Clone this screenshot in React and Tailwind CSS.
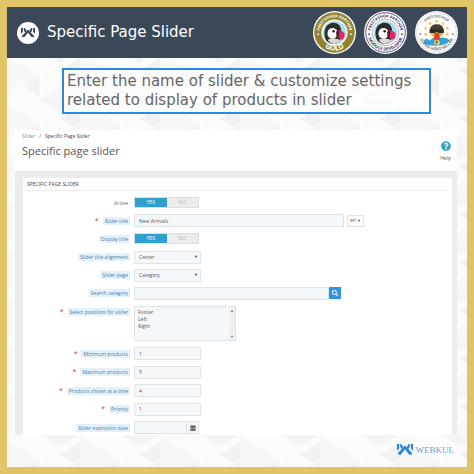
import React, { useState } from 'react';
import { FaSearch, FaQuestionCircle, FaCalendarAlt } from 'react-icons/fa';

const fieldClass = 'h-[13px] border border-[#dde3e6] bg-[#f4f8fa] px-1 text-[5px] leading-[7px] text-[#555] rounded-[1px] outline-none';

function Backdrop() {
  return (
    <svg className="absolute inset-0 h-full w-full" aria-hidden="true">
      <defs>
        <pattern id="triangles" width="80" height="48" x="-7" y="428" patternUnits="userSpaceOnUse">
          <rect width="80" height="48" fill="#fbfbfb" />
          <path d="M0 0L40 24L0 48Z" fill="#f8f8f8" />
          <path d="M40 0L80 0L60 12Z" fill="#f4f4f4" />
          <path d="M40 48L80 24V48Z" fill="#f7f7f7" />
          <path d="M80 8V31L60 20Z" fill="#f1f1f1" />
          <path d="M22 33L40 22V46Z" fill="#f2f2f2" />
          <path d="M0 0L40 24L0 48M80 0L40 24L80 48M40 0V48" stroke="#fff" strokeWidth="1" fill="none" />
        </pattern>
      </defs>
      <rect width="100%" height="100%" fill="url(#triangles)" />
    </svg>
  );
}

function WebkulMark({ className }) {
  return (
    <svg viewBox="0 0 30 20" className={className} fill="currentColor" aria-hidden="true">
      <path d="M0 0H4V8L0 13ZM30 0H26V8L30 13Z" />
      <path d="M6 0H8L12 6L9 10L6 5ZM24 0H22L18 6L21 10L24 5Z" />
      <path d="M15 3L29 18L26 20H23L15 10L7 20H4L1 18Z" />
    </svg>
  );
}

function Puffin() {
  return (
    <g>
      <circle cx="50" cy="50" r="27" fill="#a5dbea" />
      <path d="M31 69C23 55 26 31 43 28C59 25 68 38 65 51C63 62 66 66 61 72C51 79 38 77 31 69Z" fill="#2d2b2d" />
      <path d="M34 49C36 38 48 37 54 43C60 49 56 63 47 65C38 65 32 59 34 49Z" fill="#fff" />
      <path d="M34 67Q50 60 65 68Q58 76 49 77Q39 76 34 67Z" fill="#d5d9d3" />
      <circle cx="48" cy="47" r="3" fill="#222" />
      <path d="M54 48Q64 40 73 52Q75 62 68 67Q60 64 55 58Z" fill="#e8265f" />
      <path d="M54 48Q59 44 61 47L60 61L55 58Z" fill="#342d38" />
    </g>
  );
}

const stars = [[25, 40], [35, 29], [50, 24], [65, 29], [75, 40], [25, 54], [75, 54]];

function Hero() {
  return (
    <g>
      {stars.map(([x, y]) => (
        <path
          key={`${x}-${y}`}
          d="M0 -5L1.5 -1.6L5 -1.5L2.3 .8L3.2 4.3L0 2.4L-3.2 4.3L-2.3 .8L-5 -1.5L-1.5 -1.6Z"
          transform={`translate(${x} ${y})`}
          fill="#f5c842"
        />
      ))}
      <path d="M21 77Q18 66 28 64L34 69L42 62H60Q76 61 81 70L72 76Q51 86 21 77Z" fill="#2da2dd" />
      <path d="M36 46Q34 33 51 33Q68 33 65 46V56Q51 68 37 56Z" fill="#f2b632" />
      <path d="M34 44Q36 31 51 31Q65 31 67 44Z" fill="#4a3a35" />
      <path d="M34 43H67V51H55L51 48L47 51H34Z" fill="#28272a" />
      <path d="M46 51H56L58 65L51 72L44 65Z" fill="#e33835" />
      <circle cx="51" cy="74" r="7" fill="#f5d24b" />
      <path d="M49 79V70H52Q55 73 49 75" stroke="#1976b4" strokeWidth="2" fill="none" />
    </g>
  );
}

function Badge({ id, top, bottom, outer, ring, hub, ink, bottomSize, children }) {
  return (
    <svg viewBox="0 0 100 100" className="size-[43px]" role="img" aria-label={`${top} ${bottom}`}>
      <defs>
        <path id={`${id}-top`} d="M15 50A35 35 0 0 1 85 50" />
        <path id={`${id}-bottom`} d="M8 50A42 42 0 0 0 92 50" />
      </defs>
      <circle cx="50" cy="50" r="50" fill="#fff" />
      <circle cx="50" cy="50" r="46" fill={outer} stroke={ring} strokeWidth="2" />
      <circle cx="50" cy="50" r="31" fill="#fff" stroke={hub} strokeWidth="1" />
      {children}
      <g fill={ink} fontFamily="Open Sans, sans-serif" fontWeight="700" textAnchor="middle">
        <text fontSize="9">
          <textPath href={`#${id}-top`} startOffset="50%">{top}</textPath>
        </text>
        <text fontSize={bottomSize}>
          <textPath href={`#${id}-bottom`} startOffset="50%">{bottom}</textPath>
        </text>
      </g>
      <circle cx="12" cy="54" r="2" fill={ink} />
      <circle cx="88" cy="54" r="2" fill={ink} />
    </svg>
  );
}

function Row({ id, label, required, plain, tall, children }) {
  return (
    <div className={tall ? 'flex items-start' : 'flex h-[13px] items-center'}>
      <div className={`flex w-[107px] shrink-0 items-center justify-end gap-1 ${tall ? 'pt-[2px]' : ''}`}>
        {required && <span className="text-[7px] leading-[8px] text-[#d33]">*</span>}
        <label
          htmlFor={id}
          className={`whitespace-nowrap px-[2px] text-[5px] leading-[8px] ${plain ? 'text-[#666]' : 'bg-[#e4f1fa] text-[#4f7ba6]'}`}
        >
          {label}
        </label>
      </div>
      <div className="flex flex-1 items-center pl-1">{children}</div>
    </div>
  );
}

function Switch({ name }) {
  const [on, setOn] = useState(true);

  return (
    <div className="relative flex h-[11px] w-[65px] border border-[#ddd] text-center text-[5px] leading-[9px]">
      <label className={`flex-1 ${on ? 'bg-[#2ea1cf] text-white' : 'bg-[#ececec] text-[#bbb]'}`}>
        <input id={name} type="radio" name={name} className="sr-only" checked={on} onChange={() => setOn(true)} />
        YES
      </label>
      <label className={`flex-1 ${on ? 'bg-[#ececec] text-[#bbb]' : 'bg-[#2ea1cf] text-white'}`}>
        <input type="radio" name={name} className="sr-only" checked={!on} onChange={() => setOn(false)} />
        NO
      </label>
    </div>
  );
}

function Dropdown({ id, options }) {
  return (
    <div className="relative flex">
      <select id={id} className={`${fieldClass} w-[67px] appearance-none`}>
        {options.map((option) => <option key={option}>{option}</option>)}
      </select>
      <span className="pointer-events-none absolute top-[3px] right-[3px] text-[4px] leading-[6px] text-[#333]">▼</span>
    </div>
  );
}

export default function App() {
  return (
    <div className="flex min-h-screen flex-col bg-[#e0c467] p-[7px] font-['Open_Sans',sans-serif]">
      <div className="relative flex flex-1 flex-col bg-[#fafafa]">
        <Backdrop />
        <header className="relative flex h-[51px] items-center bg-[#3a4858] pr-[9px] pl-[10px]">
          <span className="flex size-[22px] items-center justify-center rounded-full bg-white">
            <WebkulMark className="w-[14px] text-[#3a4858]" />
          </span>
          <h1 className="ml-2 flex-1 font-['DejaVu_Sans',sans-serif] text-[15px] text-white">Specific Page Slider</h1>
          <div className="flex gap-2">
            <Badge id="gold" top="PRESTASHOP PARTNER" bottom="GOLD" outer="#94812f" ring="#94812f" hub="#94812f" ink="#fff" bottomSize="17">
              <Puffin />
            </Badge>
            <Badge id="dev" top="PRESTASHOP PARTNER" bottom="MODULE DEVELOPER" outer="#fff" ring="#493d70" hub="#493d70" ink="#40345f" bottomSize="10">
              <Puffin />
            </Badge>
            <Badge id="hero" top="PRESTASHOP" bottom="SUPER HERO SELLER" outer="#fff" ring="#d5dade" hub="#fff" ink="#7b7b7b" bottomSize="10">
              <Hero />
            </Badge>
          </div>
        </header>

        <p className="relative mt-[10px] mr-[36px] ml-[55px] border-2 border-[#268be6] bg-white/60 py-[2px] pl-[3px] font-['DejaVu_Sans',sans-serif] text-[15px] leading-[19px] text-[#666]">
          Enter the name of slider &amp; customize settings related to display of products in slider
        </p>

        <main className="relative mt-4 mr-[10px] ml-2 bg-[#ececec]">
          <div className="flex h-[41px] justify-between bg-white pr-[6px] pl-[7px]">
            <div>
              <nav className="pt-[2px] text-[5px] leading-[8px] text-[#444]">
                <a href="#slider" className="text-[#888]">Slider</a>
                <span className="mx-1">/</span>
                <a href="#page">Specific Page Slider</a>
              </nav>
              <h2 className="mt-[3px] text-[11px] leading-[15px] text-[#555]">Specific page slider</h2>
            </div>
            <a href="#help" className="flex flex-col items-center pt-[11px] text-[5px] leading-[8px] text-[#555]">
              <FaQuestionCircle className="mb-[3px] size-[10px] text-[#2ea1cf]" />
              Help
            </a>
          </div>

          <form className="mt-[7px] mr-[5px] ml-2 h-[257px] bg-white">
            <h3 className="mx-1 h-[13px] border-b border-[#eee] text-[5px] leading-[12px] text-[#444]">SPECIFIC PAGE SLIDER</h3>

            <div className="flex h-[109px] flex-col justify-between pt-[5px]">
              <Row id="active" label="Active" plain>
                <Switch name="active" />
              </Row>
              <Row id="title" label="Slider title" required>
                <input id="title" defaultValue="New Arrivals" className={`${fieldClass} w-[210px]`} />
                <button type="button" className="ml-[3px] h-[12px] w-[17px] border border-[#e2e2e2] text-[5px] leading-[9px] text-[#555]">
                  en <span className="text-[4px]">▼</span>
                </button>
              </Row>
              <Row id="display" label="Display title">
                <Switch name="display" />
              </Row>
              <Row id="alignment" label="Slider title alignment">
                <Dropdown id="alignment" options={['Center', 'Left', 'Right']} />
              </Row>
              <Row id="page" label="Slider page">
                <Dropdown id="page" options={['Category', 'Product', 'Home']} />
              </Row>
              <Row id="search" label="Search category">
                <input id="search" className={`${fieldClass} w-[195px]`} />
                <button type="button" aria-label="Search" className="flex size-[12px] items-center justify-center bg-[#2f94e4] text-white">
                  <FaSearch className="size-[6px]" />
                </button>
              </Row>
            </div>

            <div className="my-[6px]">
              <Row id="positions" label="Select positions for slider" required tall>
                <div className="relative flex">
                  <select
                    id="positions"
                    multiple
                    className="h-[35px] w-[102px] overflow-hidden border border-[#dde3e6] bg-[#f4f8fa] py-[2px] pl-[2px] text-[5px] leading-[7px] text-[#555]"
                  >
                    <option className="h-[7px] min-h-0 p-0 px-[1px]">Footer</option>
                    <option className="h-[7px] min-h-0 p-0 px-[1px]">Left</option>
                    <option className="h-[7px] min-h-0 p-0 px-[1px]">Right</option>
                  </select>
                  <span className="pointer-events-none absolute top-px right-px bottom-px flex w-[6px] flex-col justify-between bg-[#eef0f1] py-px text-center text-[4px] leading-[5px] text-[#777]">
                    <span>▲</span>
                    <span>▼</span>
                  </span>
                </div>
              </Row>
            </div>

            <div className="flex h-[87px] flex-col justify-between">
              <Row id="min" label="Minimum products" required>
                <input id="min" defaultValue="1" className={`${fieldClass} w-[67px]`} />
              </Row>
              <Row id="max" label="Maximum products" required>
                <input id="max" defaultValue="5" className={`${fieldClass} w-[67px]`} />
              </Row>
              <Row id="shown" label="Products shown at a time" required>
                <input id="shown" defaultValue="4" className={`${fieldClass} w-[67px]`} />
              </Row>
              <Row id="priority" label="Priority" required>
                <input id="priority" defaultValue="1" className={`${fieldClass} w-[67px]`} />
              </Row>
              <Row id="expiration" label="Slider expiration date">
                <input id="expiration" className={`${fieldClass} w-[53px]`} />
                <button type="button" aria-label="Pick a date" className="flex h-[13px] w-[12px] items-center justify-center border border-l-0 border-[#dde3e6] bg-[#f4f8fa] text-[#555]">
                  <FaCalendarAlt className="size-[6px]" />
                </button>
              </Row>
            </div>
          </form>
        </main>

        <footer className="relative flex flex-1 items-center justify-end gap-[3px] pr-[13px] pb-[3px] text-[#2486dd]">
          <WebkulMark className="w-4" />
          <span className="font-['Liberation_Serif',serif] text-[9px] leading-[12px] text-[#6f9fd2]">WEBKUL</span>
        </footer>
      </div>
    </div>
  );
}
